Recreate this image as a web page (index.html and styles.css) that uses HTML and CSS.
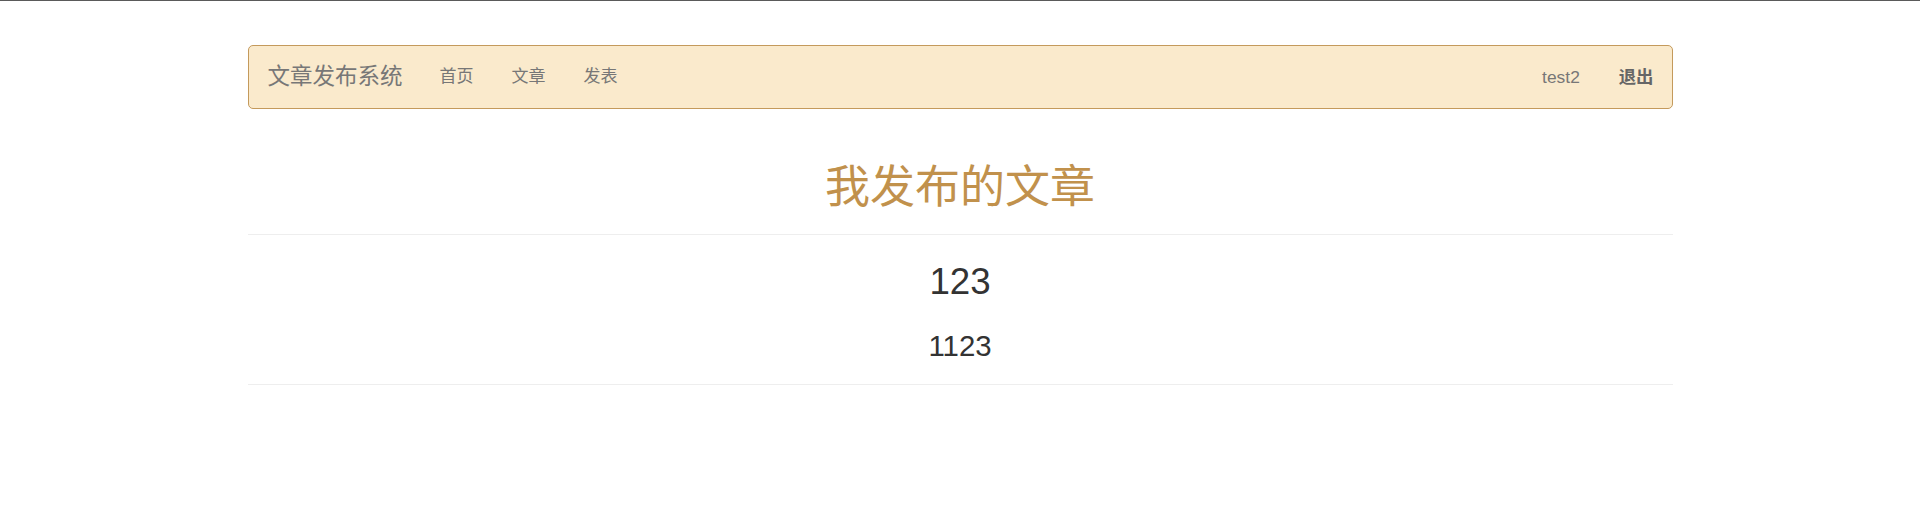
FILE: index.html
```html
<!DOCTYPE html>
<html lang="zh-CN">
<head>
<meta charset="utf-8">
<title>我发布的文章</title>
<link rel="stylesheet" href="styles.css">
</head>
<body>
<div class="topline"></div>
<div class="container">
  <nav class="navbar">
    <div class="nav-left">
      <a class="brand" href="#">文章发布系统</a>
      <a class="nav-link" href="#">首页</a>
      <a class="nav-link" href="#">文章</a>
      <a class="nav-link" href="#">发表</a>
    </div>
    <div class="nav-right">
      <a class="nav-link user" href="#">test2</a>
      <a class="nav-link logout" href="#">退出</a>
    </div>
  </nav>
  <h1 class="page-title">我发布的文章</h1>
  <hr class="rule">
  <div class="article">
    <h2 class="article-title">123</h2>
    <h3 class="article-body">1123</h3>
  </div>
  <hr class="rule">
</div>
</body>
</html>
```

FILE: styles.css
```css
html, body {
  margin: 0;
  padding: 0;
  background: #fff;
}
body {
  font-family: "Liberation Sans", Arial, "Noto Sans CJK SC", sans-serif;
  color: #333;
}
.topline {
  height: 1px;
  background: #5a5a5a;
}
.container {
  width: 1425px;
  margin: 0 auto;
}
.navbar {
  margin-top: 44px;
  height: 62px;
  border: 1px solid #c49a5c;
  border-radius: 5px;
  background: #faeacc;
  display: flex;
  align-items: center;
  justify-content: space-between;
}
.nav-left, .nav-right {
  display: flex;
  align-items: center;
  height: 100%;
}
.navbar a {
  text-decoration: none;
  color: #777;
}
.brand {
  font-size: 22.5px;
  padding: 0 18px 0 19px;
  line-height: 62px;
}
.nav-link {
  font-size: 17px;
  padding: 0 18.4px;
  line-height: 62px;
}
.nav-left .nav-link {
  padding: 0 19px;
}
.nav-left .brand + .nav-link {
  padding-left: 19px;
}
.nav-right .user {
  font-size: 17.4px;
  padding-right: 20.5px;
}
.nav-right .logout {
  font-size: 17.4px;
  font-weight: bold;
  color: #666;
  padding-right: 18px;
}
.page-title {
  margin: 55px 0 0;
  font-size: 45px;
  line-height: 48px;
  font-weight: normal;
  text-align: center;
  color: #c1914c;
}
.rule {
  margin: 22px 0 0;
  border: 0;
  border-top: 1px solid #eee;
  height: 0;
}
.article {
  text-align: center;
}
.article-title {
  margin: 27px 0 0;
  font-size: 36.7px;
  line-height: 40px;
  font-weight: normal;
  color: #333;
}
.article-body {
  margin: 28px 0 0;
  font-size: 29.4px;
  line-height: 32px;
  font-weight: normal;
  color: #333;
}
.article + .rule {
  margin-top: 22px;
}
```
